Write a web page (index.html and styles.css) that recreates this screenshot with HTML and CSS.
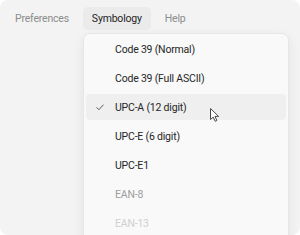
FILE: index.html
```html
<!DOCTYPE html>
<html>
<head>
<meta charset="utf-8">
<link rel="stylesheet" href="styles.css">
</head>
<body>
<div class="frame">
  <div class="menubar">
    <div class="mb-item muted">Preferences</div>
    <div class="mb-item active">Symbology</div>
    <div class="mb-item muted">Help</div>
  </div>
  <div class="dropdown">
    <div class="item">Code 39 (Normal)</div>
    <div class="item">Code 39 (Full ASCII)</div>
    <div class="item selected">
      <svg class="check" width="8" height="7" viewBox="0 0 8 7"><path d="M0.8 3.6 L2.9 5.7 L7.2 1" fill="none" stroke="#5a5a5a" stroke-width="1" stroke-linecap="round" stroke-linejoin="round"/></svg>
      UPC-A (12 digit)
    </div>
    <div class="item">UPC-E (6 digit)</div>
    <div class="item">UPC-E1</div>
    <div class="item dim">EAN-8</div>
    <div class="item faint">EAN-13</div>
  </div>
  <svg class="cursor" width="12" height="16" viewBox="0 0 12 16"><path d="M1.5 1.5 L1.5 12.5 L4.2 10.1 L6.2 14.3 L7.9 13.5 L6 9.4 L9.6 9.4 Z" fill="#fff" stroke="#4a4a4a" stroke-width="1" stroke-linejoin="round"/></svg>
</div>
</body>
</html>
```
FILE: styles.css
```css
html, body { margin: 0; padding: 0; background: #ffffff; }
body { font-family: Roboto, "Noto Sans", sans-serif; font-size: 10.5px; letter-spacing: -0.2px; }
.frame {
  position: relative;
  width: 300px;
  height: 235px;
  background: #f3f3f3;
  border-radius: 8px;
  overflow: hidden;
}
.menubar {
  display: flex;
  gap: 5px;
  padding: 7px 0 0 6px;
}
.mb-item {
  height: 23px;
  line-height: 24px;
  padding: 0 9px;
  border-radius: 5px;
}
.mb-item.muted { color: #8c8c8c; }
.mb-item.active { background: #ebebeb; color: #1f1f1f; }
.dropdown {
  position: absolute;
  left: 83px;
  top: 33px;
  width: 200px;
  height: 230px;
  background: #f9f9f9;
  border: 1px solid #e6e6e6;
  border-radius: 7px;
  box-shadow: 0 4px 12px rgba(0,0,0,0.07);
  padding: 2px 2px;
  display: flex;
  flex-direction: column;
  gap: 3px;
}
.item {
  position: relative;
  height: 26px;
  line-height: 27px;
  padding-left: 29px;
  border-radius: 4px;
  color: #262626;
}
.item.selected { background: #efefef; }
.item.dim { color: #9d9d9d; }
.item.faint { color: #d0d0d0; }
.check { position: absolute; left: 10px; top: 10px; }
.cursor { position: absolute; left: 209px; top: 107px; }
```
